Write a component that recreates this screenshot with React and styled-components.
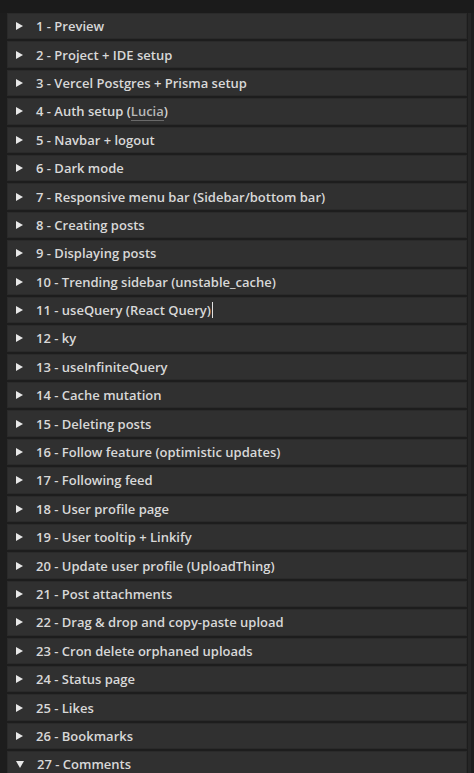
import React from "react";
import styled, { createGlobalStyle } from "styled-components";

const chapters = [
  "1 - Preview",
  "2 - Project + IDE setup",
  "3 - Vercel Postgres + Prisma setup",
  "4 - Auth setup (Lucia)",
  "5 - Navbar + logout",
  "6 - Dark mode",
  "7 - Responsive menu bar (Sidebar/bottom bar)",
  "8 - Creating posts",
  "9 - Displaying posts",
  "10 - Trending sidebar (unstable_cache)",
  "11 - useQuery (React Query)",
  "12 - ky",
  "13 - useInfiniteQuery",
  "14 - Cache mutation",
  "15 - Deleting posts",
  "16 - Follow feature (optimistic updates)",
  "17 - Following feed",
  "18 - User profile page",
  "19 - User tooltip + Linkify",
  "20 - Update user profile (UploadThing)",
  "21 - Post attachments",
  "22 - Drag & drop and copy-paste upload",
  "23 - Cron delete orphaned uploads",
  "24 - Status page",
  "25 - Likes",
  "26 - Bookmarks",
  "27 - Comments",
];

const GlobalStyle = createGlobalStyle`
  html, body {
    margin: 0;
    padding: 0;
    background: #1d1d1d;
    overflow: hidden;
  }
`;

export default function App() {
  return (
    <>
      <GlobalStyle />
      <Page>
        <TopBar />
        <Body>
          <List>
            {chapters.map((title, index) => {
              const open = index === chapters.length - 1;
              let label = title;
              if (title.includes("(Lucia)")) {
                label = (
                  <>
                    4 - Auth setup (<Link>Lucia</Link>)
                  </>
                );
              }
              return (
                <Row key={index}>
                  <Arrow $open={open} />
                  <Title>
                    {label}
                    {index === 10 && <Caret />}
                  </Title>
                </Row>
              );
            })}
          </List>
          <Scroll />
        </Body>
      </Page>
    </>
  );
}

const Page = styled.div`
  width: 474px;
  height: 773px;
  background: #1d1d1d;
  font-family: "Open Sans", "Noto Sans", sans-serif;
  display: flex;
  flex-direction: column;
`;

const TopBar = styled.div`
  height: 13px;
  background: #1b1b1b;
  flex-shrink: 0;
`;

const Body = styled.div`
  display: flex;
  padding-left: 7px;
`;

const List = styled.div`
  width: 460px;
  display: flex;
  flex-direction: column;
  gap: 2px;
`;

const Scroll = styled.div`
  width: 3px;
  margin-left: 1px;
  background: #262626;
`;

const Row = styled.div`
  height: 26.4px;
  display: flex;
  align-items: center;
  background: #303030;
  border: 1px solid #2a2a2a;
  box-sizing: border-box;
`;

const Arrow = styled.span`
  width: 0;
  height: 0;
  margin-left: 8px;
  margin-right: 13px;
  ${({ $open }) =>
    $open
      ? `border-left: 4px solid transparent;
         border-right: 4px solid transparent;
         border-top: 7px solid #e8e8e8;`
      : `border-top: 4px solid transparent;
         border-bottom: 4px solid transparent;
         border-left: 7px solid #e8e8e8;`}
`;

const Title = styled.span`
  color: #d8d8d8;
  font-size: 13px;
  font-weight: 600;
  display: flex;
  align-items: center;
  white-space: pre;
`;

const Link = styled.span`
  color: #b8b8b8;
  border-bottom: 1px solid #6a6a6a;
`;

const Caret = styled.span`
  width: 1px;
  height: 16px;
  margin-left: 1px;
  background: #e0e0e0;
`;
